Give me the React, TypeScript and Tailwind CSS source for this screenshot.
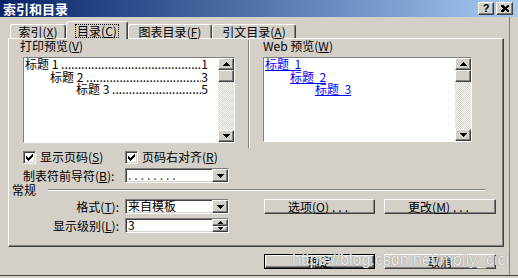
import React from "react";

const raised =
  "border border-t-white border-l-white border-r-[#404040] border-b-[#404040] shadow-[inset_-1px_-1px_#808080] bg-[#d4d0c8]";
const sunken =
  "border border-t-[#808080] border-l-[#808080] border-r-white border-b-white shadow-[inset_1px_1px_#404040,inset_-1px_-1px_#d4d0c8]";

function M({ c }: { c: string }) {
  return (
    <span>
      (<span className="underline underline-offset-1">{c}</span>)
    </span>
  );
}

function Down() {
  return (
    <svg width="7" height="4" viewBox="0 0 7 4" shapeRendering="crispEdges">
      <path d="M0 0h7v1h-1v1h-1v1h-1v1h-1v-1h-1v-1h-1v-1h-1z" fill="#000" />
    </svg>
  );
}

function Up() {
  return (
    <svg width="7" height="4" viewBox="0 0 7 4" shapeRendering="crispEdges">
      <path d="M0 4h7v-1h-1v-1h-1v-1h-1v-1h-1v1h-1v1h-1v1h-1z" fill="#000" />
    </svg>
  );
}

function VScroll() {
  return (
    <div className="w-[16px] h-full flex flex-col shrink-0">
      <div className={`${raised} h-[12px] flex items-center justify-center`}>
        <Up />
      </div>
      <div className={`${raised} h-[12px]`} />
      <div className="flex-1 bg-[repeating-conic-gradient(#d4d0c8_0_25%,#ffffff_0_50%)] bg-[length:2px_2px]" />
      <div className={`${raised} h-[12px] flex items-center justify-center`}>
        <Down />
      </div>
    </div>
  );
}

const DOTS = ".".repeat(120);

function TocRow({ label, page, indent }: { label: string; page: string; indent: string }) {
  return (
    <div className={`flex h-[12.5px] leading-[11px] whitespace-nowrap pr-[10px] ${indent}`}>
      <span className="shrink-0 whitespace-pre">{label} </span>
      <span className="flex-1 min-w-0 overflow-hidden">{DOTS}</span>
      <span className="shrink-0">{page}</span>
    </div>
  );
}

function WebRow({ label, indent }: { label: string; indent: string }) {
  return (
    <div className={`flex h-[12.5px] leading-[11px] whitespace-nowrap ${indent}`}>
      <span className="text-[#0000ff] underline underline-offset-1 whitespace-pre">{label}</span>
    </div>
  );
}

function CheckBox() {
  return (
    <div className={`${sunken} w-[13px] h-[13px] bg-white flex items-center justify-center shrink-0`}>
      <svg width="7" height="7" viewBox="0 0 7 7" shapeRendering="crispEdges">
        <path
          d="M6 0h1v3h-1v1h-1v1h-1v1h-1v1h-1v-1h-1v-1h-1v-3h1v1h1v1h1v-1h1v-1h1z"
          fill="#000"
        />
      </svg>
    </div>
  );
}

function Combo({ children }: { children: React.ReactNode }) {
  return (
    <div className={`${sunken} w-[104px] h-[15px] bg-white flex`}>
      <div className="flex-1 min-w-0 pl-[2px] leading-[11px] overflow-hidden whitespace-nowrap">{children}</div>
      <div className={`${raised} w-[16px] h-full flex items-center justify-center`}>
        <Down />
      </div>
    </div>
  );
}

function Spin({ children }: { children: React.ReactNode }) {
  return (
    <div className={`${sunken} w-[104px] h-[15px] bg-white flex`}>
      <div className="flex-1 pl-[2px] leading-[11px]">{children}</div>
      <div className="w-[16px] h-full flex flex-col">
        <div className={`${raised} flex-1 flex items-center justify-center`}>
          <svg width="5" height="3" viewBox="0 0 5 3" shapeRendering="crispEdges">
            <path d="M0 3h5v-1h-1v-1h-1v-1h-1v1h-1v1h-1z" fill="#000" />
          </svg>
        </div>
        <div className={`${raised} flex-1 flex items-center justify-center`}>
          <svg width="5" height="3" viewBox="0 0 5 3" shapeRendering="crispEdges">
            <path d="M0 0h5v1h-1v1h-1v1h-1v-1h-1v-1h-1z" fill="#000" />
          </svg>
        </div>
      </div>
    </div>
  );
}

function Button({ children, w, def }: { children: React.ReactNode; w: string; def?: boolean }) {
  if (def) {
    return (
      <div className={`border border-black h-[15px] ${w}`}>
        <div className={`${raised} h-full flex items-center justify-center leading-[11px]`}>{children}</div>
      </div>
    );
  }
  return (
    <div className={`${raised} h-[15px] ${w} flex items-center justify-center leading-[11px]`}>{children}</div>
  );
}

function Tab({ children, w, selected }: { children: React.ReactNode; w: string; selected?: boolean }) {
  return (
    <div
      className={`${w} ${
        selected ? "h-[18px] -mb-[1px] z-10 pt-[1px]" : "h-[14px]"
      } relative bg-[#d4d0c8] border-t border-l border-r border-t-white border-l-white border-r-[#404040] shadow-[inset_-1px_0_#808080] rounded-t-[3px] flex items-center justify-center leading-[12px]`}
    >
      {selected ? (
        <span className="border border-dotted border-black px-[1px]">{children}</span>
      ) : (
        children
      )}
    </div>
  );
}

export default function App() {
  return (
    <div className="w-[518px] h-[278px] bg-[#d4d0c8] overflow-hidden relative text-[12px] leading-[14px] text-black font-['Noto_Sans_CJK_SC',sans-serif] select-none">
      {/* title bar */}
      <div className="h-[17px] flex items-center bg-linear-to-r from-[#0a246a] to-[#a6caf0] pl-[3px] pr-[5px]">
        <span className="text-white font-bold text-[13px] leading-[17px] flex-1">索引和目录</span>
        <div className={`${raised} w-[16px] h-[13px] flex items-center justify-center font-bold text-[11px] leading-[11px] font-['Liberation_Sans',sans-serif]`}>
          ?
        </div>
        <div className={`${raised} w-[17px] h-[13px] ml-[2px] flex items-center justify-center`}>
          <svg width="8" height="7" viewBox="0 0 8 7" shapeRendering="crispEdges">
            <path d="M0 0h2l2 2 2-2h2v1l-2 2.5 2 2.5v1h-2l-2-2-2 2h-2v-1l2-2.5-2-2.5z" fill="#000" />
          </svg>
        </div>
      </div>

      {/* tabs */}
      <div className="h-[21px] flex items-end pl-[10px]">
        <Tab w="w-[56px]">
          索引<M c="X" />
        </Tab>
        <Tab w="w-[62px]" selected>
          目录<M c="C" />
        </Tab>
        <Tab w="w-[84px]">
          图表目录<M c="F" />
        </Tab>
        <Tab w="w-[84px]">
          引文目录<M c="A" />
        </Tab>
      </div>

      {/* tab panel */}
      <div className="ml-[8px] w-[496px] h-[209px] border border-t-white border-l-white border-r-[#404040] border-b-[#404040] shadow-[inset_-1px_-1px_#808080] flex flex-col">
        {/* previews */}
        <div className="h-[110px] flex">
          <div className="w-[239px] shrink-0 flex flex-col">
            <div className="ml-[11px] h-[14px]">
              打印预览<M c="V" />
            </div>
            <div className={`${sunken} ml-[14px] mt-[4px] w-[212px] h-[86px] flex`}>
              <div className="flex-1 min-w-0 overflow-hidden bg-white pl-[1px]">
                <TocRow label="标题 1" page="1" indent="pl-0" />
                <TocRow label="标题 2" page="3" indent="pl-[25px]" />
                <TocRow label="标题 3" page="5" indent="pl-[51px]" />
              </div>
              <VScroll />
            </div>
          </div>
          <div className="w-[2px] shrink-0 mt-[1px] h-[108px] border-l border-l-[#808080] border-r border-r-white" />
          <div className="flex flex-col">
            <div className="ml-[13px] h-[14px]">
              Web 预览<M c="W" />
            </div>
            <div className={`${sunken} ml-[13px] mt-[4px] w-[209px] h-[85px] flex`}>
              <div className="flex-1 min-w-0 overflow-hidden bg-white pl-[1px]">
                <WebRow label="标题  1" indent="pl-0" />
                <WebRow label="标题  2" indent="pl-[25px]" />
                <WebRow label="标题  3" indent="pl-[50px]" />
              </div>
              <VScroll />
            </div>
          </div>
        </div>

        {/* check boxes */}
        <div className="h-[14px] mt-[1px] flex items-center pl-[14px]">
          <div className="w-[102px] flex items-center">
            <CheckBox />
            <span className="ml-[4px]">
              显示页码<M c="S" />
            </span>
          </div>
          <div className="flex items-center">
            <CheckBox />
            <span className="ml-[4px]">
              页码右对齐<M c="R" />
            </span>
          </div>
        </div>

        {/* leader */}
        <div className="h-[15px] mt-[4px] flex items-center pl-[14px]">
          <div className="w-[102px] whitespace-nowrap">
            制表符前导符<M c="B" />:
          </div>
          <Combo>
            <span className="tracking-[3px] text-[#404040]">........</span>
          </Combo>
        </div>

        {/* 常规 */}
        <div className="h-[14px] flex items-center pl-[3px]">
          <span>常规</span>
          <div className="ml-[12px] w-[437px] h-[2px] border-t border-t-[#808080] border-b border-b-white" />
        </div>

        {/* format row */}
        <div className="h-[15px] mt-[2px] flex items-center">
          <div className="w-[111px] text-right pr-[1px] whitespace-nowrap">
            格式<M c="T" />:
          </div>
          <div className="ml-[5px]">
            <Combo>来自模板</Combo>
          </div>
          <div className="ml-[35px]">
            <Button w="w-[111px]">
              选项<M c="O" />
              <span className="tracking-[3px] ml-[3px]">...</span>
            </Button>
          </div>
          <div className="ml-[9px]">
            <Button w="w-[112px]">
              更改<M c="M" />
              <span className="tracking-[3px] ml-[3px]">...</span>
            </Button>
          </div>
        </div>

        {/* level row */}
        <div className="h-[15px] mt-[4px] flex items-center">
          <div className="w-[111px] text-right pr-[1px] whitespace-nowrap">
            显示级别<M c="L" />:
          </div>
          <div className="ml-[5px]">
            <Spin>3</Spin>
          </div>
        </div>
      </div>

      {/* bottom buttons */}
      <div className="h-[15px] mt-[7px] flex">
        <div className="ml-[264px]">
          <Button w="w-[111px]" def>
            确定
          </Button>
        </div>
        <div className="ml-[9px]">
          <Button w="w-[112px]">取消</Button>
        </div>
      </div>

      {/* window frame lines */}
      <div className="absolute left-[509px] top-[17px] bottom-[3px] w-[1px] bg-[#808080]" />
      <div className="absolute left-0 right-0 top-[275px] h-[1px] bg-[#404040]" />

      {/* watermark */}
      <div className="absolute left-[292px] top-[251px] text-[16px] leading-[18px] whitespace-nowrap text-white/85 font-['Liberation_Sans',sans-serif] [text-shadow:0_0_1px_#666]">
        https://blog.csdn.net/molly_cici
      </div>
    </div>
  );
}
